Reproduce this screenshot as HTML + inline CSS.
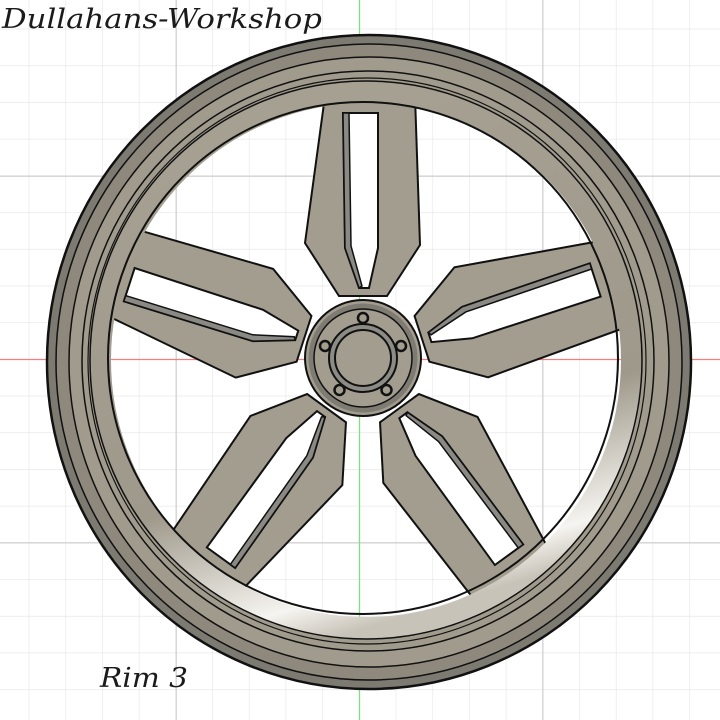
<!DOCTYPE html>
<html><head><meta charset="utf-8"><style>
html,body{margin:0;padding:0;background:#fff;}
svg{display:block}
text{font-family:"DejaVu Serif","Liberation Serif",serif;font-style:italic;fill:#1a1a1a}
</style></head><body>
<svg width="720" height="720" viewBox="0 0 720 720" xmlns="http://www.w3.org/2000/svg">
<defs>
<pattern id="g" x="28.7" y="28.7" width="36.7" height="36.7" patternUnits="userSpaceOnUse">
<path d="M0 0H36.7M0 0V36.7" stroke="#e4e4e4" stroke-width="1.2" fill="none"/>
</pattern>
<linearGradient id="lip" x1="0.2" y1="0" x2="0.5" y2="1">
<stop offset="0" stop-color="#a7a193"/><stop offset="0.7" stop-color="#9f998b"/><stop offset="0.93" stop-color="#f6f4f0"/><stop offset="1" stop-color="#c8c3b8"/>
</linearGradient>
<g id="spoke">
<path d="M-38,-262 L-58,-115 L-24,-62 L24,-62 L57,-113 L52,-262 Z" fill="#a39d8f" stroke="#111" stroke-width="2"/>
<path d="M-20,-245 L-18,-110 L-4,-70 L6,-70 L15,-110 L15,-245 Z" fill="#fff" stroke="#111" stroke-width="2"/>
<path d="M-20,-245 L-14,-245 L-12,-112 L-1,-72 L-4,-70 L-18,-110 Z" fill="#8a8984" stroke="#111" stroke-width="1.5"/>
</g>
</defs>
<rect width="720" height="720" fill="url(#g)"/>
<path d="M176.2 0V720M542.8 0V720M0 176.2H720M0 542.8H720" stroke="#d2d2d2" stroke-width="1.3"/>
<path d="M359.5 0V720" stroke="#7fe07f" stroke-width="1.3"/>
<path d="M0 359.5H720" stroke="#f08080" stroke-width="1.3"/>

<g transform="translate(363,358)">
<use href="#spoke"/>
<use href="#spoke" transform="rotate(72)"/>
<use href="#spoke" transform="rotate(144)"/>
<use href="#spoke" transform="rotate(216)"/>
<use href="#spoke" transform="rotate(288)"/>
</g>

<g fill="none" stroke="#111">
<ellipse cx="369" cy="362" rx="292" ry="296" stroke="#a19b8d" stroke-width="62"/>
<ellipse cx="369" cy="362" rx="317" ry="322" stroke="#7d7a72" stroke-width="10"/>
<ellipse cx="369" cy="362" rx="306" ry="311" stroke="#8e897c" stroke-width="12"/>
<ellipse cx="366" cy="360" rx="266" ry="268" stroke="url(#lip)" stroke-width="22"/>
<ellipse cx="369" cy="362" rx="322" ry="327" stroke-width="2.5"/>
<ellipse cx="369" cy="362" rx="313" ry="318" stroke-width="1.5"/>
<ellipse cx="369" cy="362" rx="300" ry="305" stroke-width="1.5"/>
<ellipse cx="368" cy="361" rx="286" ry="290" stroke-width="1.5"/>
<ellipse cx="367" cy="361" rx="279" ry="283" stroke-width="1.2"/>
<ellipse cx="366" cy="360" rx="276" ry="279" stroke-width="1.5"/>
<ellipse cx="363" cy="358" rx="255" ry="256" stroke-width="2"/>
</g>

<g transform="translate(363,358)" stroke="#111">
<circle r="58" fill="#a39d8f" stroke-width="2"/>
<circle r="52" fill="none" stroke="#7e7b73" stroke-width="5"/>
<circle r="49" fill="#a39d8f" stroke-width="1.5"/>
<circle r="34" fill="#8d8b85" stroke-width="2"/>
<circle r="28" fill="#a39d8f" stroke-width="2"/>
<g fill="#a39d8f" stroke-width="2.5">
<circle cx="0" cy="-40" r="5"/>
<circle cx="38" cy="-12" r="5"/>
<circle cx="23.5" cy="32" r="5"/>
<circle cx="-23.5" cy="32" r="5"/>
<circle cx="-38" cy="-12" r="5"/>
</g>
</g>

<text x="2" y="28" font-size="27" textLength="320" lengthAdjust="spacingAndGlyphs">Dullahans-Workshop</text>
<text x="100" y="687" font-size="27" textLength="88" lengthAdjust="spacingAndGlyphs">Rim 3</text>
</svg>
</body></html>
